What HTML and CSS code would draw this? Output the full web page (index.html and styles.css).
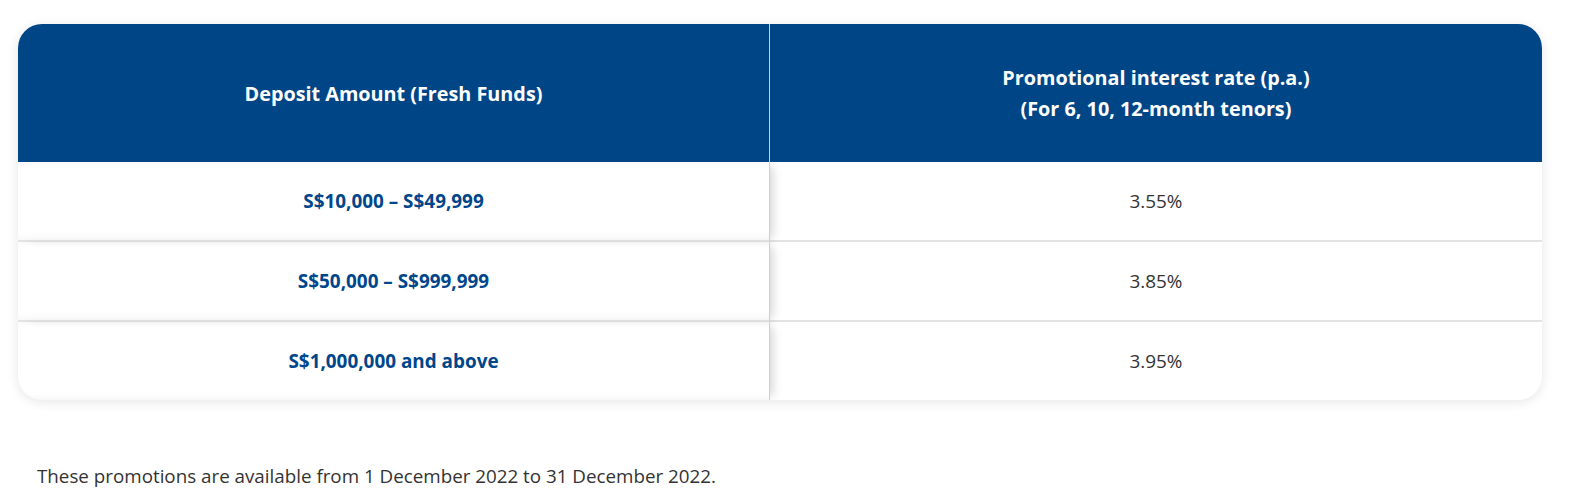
FILE: index.html
```html
<!DOCTYPE html>
<html>
<head>
<meta charset="utf-8">
<link rel="stylesheet" href="styles.css">
</head>
<body>
<div class="page">
  <div class="card">
    <div class="grid">
      <div class="head head-left">Deposit Amount (Fresh Funds)</div>
      <div class="head head-right">Promotional interest rate (p.a.)<br>(For 6, 10, 12-month tenors)</div>

      <div class="cell amount">S$10,000 – S$49,999</div>
      <div class="cell rate">3.55%</div>

      <div class="cell amount">S$50,000 – S$999,999</div>
      <div class="cell rate">3.85%</div>

      <div class="cell amount last">S$1,000,000 and above</div>
      <div class="cell rate last">3.95%</div>
    </div>
  </div>
  <p class="note">These promotions are available from 1 December 2022 to 31 December 2022.</p>
</div>
</body>
</html>
```

FILE: styles.css
```css
html, body {
  margin: 0;
  padding: 0;
  background: #ffffff;
}
body {
  font-family: "Open Sans", "Noto Sans", "Liberation Sans", sans-serif;
  color: #333333;
}
.page {
  padding: 24px 0 0 18px;
}
.card {
  width: 1524px;
  border-radius: 24px;
  overflow: hidden;
  background: #ffffff;
  box-shadow: 0 2px 12px rgba(0, 0, 0, 0.10);
}
.grid {
  display: grid;
  grid-template-columns: 752px 772px;
  grid-template-rows: 138px 80px 80px 78px;
}
.head {
  background: #004687;
  color: #ffffff;
  font-weight: 700;
  font-size: 19.8px;
  line-height: 31px;
  display: flex;
  align-items: center;
  justify-content: center;
  text-align: center;
}
.head-left {
  border-right: 1px solid #c9d2dc;
}
.cell {
  display: flex;
  align-items: center;
  justify-content: center;
  font-size: 18.9px;
  border-bottom: 2px solid #e3e3e3;
}
.cell.last {
  border-bottom: none;
}
.amount {
  color: #00468b;
  font-weight: 700;
  position: relative;
  z-index: 1;
  border-right: 1px solid #cfcfcf;
  box-shadow: 7px 0 9px -4px rgba(0, 0, 0, 0.16), inset 0 8px 8px -6px rgba(0, 0, 0, 0.03), inset 0 -8px 8px -6px rgba(0, 0, 0, 0.04);
}
.rate {
  color: #333333;
  font-weight: 400;
}
.note {
  margin: 62px 0 0 19px;
  font-size: 18.8px;
  line-height: 28px;
  color: #333333;
}
```
